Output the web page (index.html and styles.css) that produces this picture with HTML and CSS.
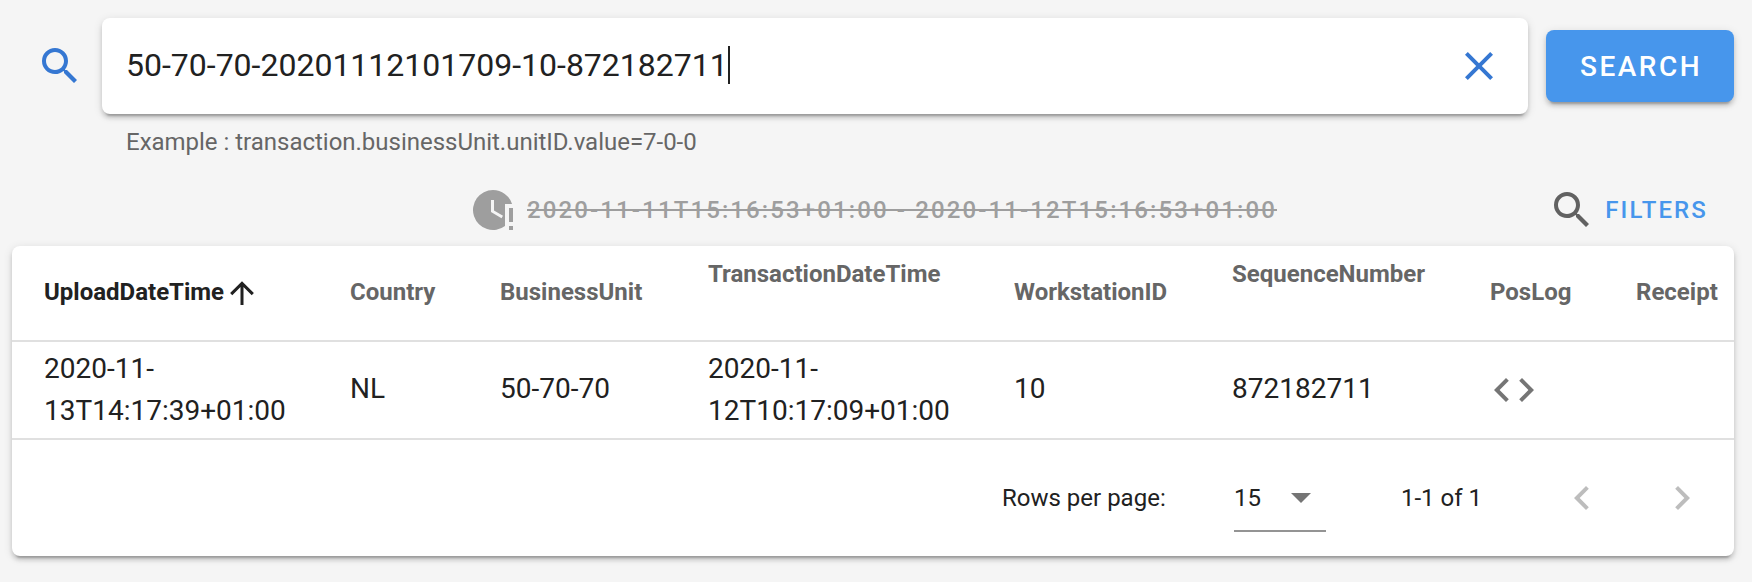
FILE: index.html
```html
<!DOCTYPE html>
<html lang="en">
<head>
<meta charset="utf-8">
<title>Transaction search</title>
<link rel="stylesheet" href="styles.css">
</head>
<body>
<main class="page">
  <form class="search">
    <svg class="icon search-icon" viewBox="0 0 24 24"><path d="M9.5,3A6.5,6.5 0 0,1 16,9.5C16,11.11 15.41,12.59 14.44,13.73L14.71,14H15.5L20.5,19L19,20.5L14,15.5V14.71L13.73,14.44C12.59,15.41 11.11,16 9.5,16A6.5,6.5 0 0,1 3,9.5A6.5,6.5 0 0,1 9.5,3M9.5,5C7,5 5,7 5,9.5C5,12 7,14 9.5,14C12,14 14,12 14,9.5C14,7 12,5 9.5,5Z"/></svg>
    <div class="field">
      <span class="field-value">50-70-70-20201112101709-10-872182711</span><span class="caret"></span>
      <svg class="icon clear-icon" viewBox="0 0 24 24"><path d="M19,6.41L17.59,5L12,10.59L6.41,5L5,6.41L10.59,12L5,17.59L6.41,19L12,13.41L17.59,19L19,17.59L13.41,12L19,6.41Z"/></svg>
    </div>
    <button class="search-button" type="button">SEARCH</button>
  </form>
  <div class="hint">Example : transaction.businessUnit.unitID.value=7-0-0</div>

  <div class="toolbar">
    <div class="range">
      <svg class="icon" viewBox="0 0 24 24"><path fill-rule="evenodd" d="M12,2A10,10 0 1,0 18,20V9H21.54A10,10 0 0,0 12,2M11,7H12.5V12.25L17,14.92L16.25,16.15L11,13V7M20,11H22V18H20V11M20,20H22V22H20V20Z"/></svg>
      <span class="range-text">2020-11-11T15:16:53+01:00 - 2020-11-12T15:16:53+01:00</span>
    </div>
    <div class="filters">
      <svg class="icon filters-icon" viewBox="0 0 24 24"><path d="M9.5,3A6.5,6.5 0 0,1 16,9.5C16,11.11 15.41,12.59 14.44,13.73L14.71,14H15.5L20.5,19L19,20.5L14,15.5V14.71L13.73,14.44C12.59,15.41 11.11,16 9.5,16A6.5,6.5 0 0,1 3,9.5A6.5,6.5 0 0,1 9.5,3M9.5,5C7,5 5,7 5,9.5C5,12 7,14 9.5,14C12,14 14,12 14,9.5C14,7 12,5 9.5,5Z"/></svg>
      <span class="filters-label">FILTERS</span>
    </div>
  </div>

  <section class="card">
    <div class="row head">
      <div class="cell sorted">UploadDateTime<svg class="sort-icon" viewBox="0 0 24 24"><path d="M13,20H11V8L5.5,13.5L4.08,12.08L12,4.16L19.92,12.08L18.5,13.5L13,8V20Z"/></svg></div>
      <div class="cell">Country</div>
      <div class="cell">BusinessUnit</div>
      <div class="cell raised">TransactionDateTime</div>
      <div class="cell">WorkstationID</div>
      <div class="cell raised">SequenceNumber</div>
      <div class="cell">PosLog</div>
      <div class="cell">Receipt</div>
    </div>
    <div class="row body">
      <div class="cell">2020-11-<br>13T14:17:39+01:00</div>
      <div class="cell single">NL</div>
      <div class="cell single">50-70-70</div>
      <div class="cell">2020-11-<br>12T10:17:09+01:00</div>
      <div class="cell single">10</div>
      <div class="cell single">872182711</div>
      <div class="cell"><svg class="icon code-icon" viewBox="0 0 24 24"><path d="M14.6,16.6L19.2,12L14.6,7.4L16,6L22,12L16,18L14.6,16.6M9.4,16.6L4.8,12L9.4,7.4L8,6L2,12L8,18L9.4,16.6Z"/></svg></div>
      <div class="cell"></div>
    </div>
    <div class="footer">
      <span class="footer-label">Rows per page:</span>
      <div class="select">
        <span class="select-value">15</span>
        <svg class="icon select-icon" viewBox="0 0 24 24"><path d="M7,10L12,15L17,10H7Z"/></svg>
      </div>
      <span class="footer-range">1-1 of 1</span>
      <svg class="icon page-icon" viewBox="0 0 24 24"><path d="M15.41,16.58L10.83,12L15.41,7.41L14,6L8,12L14,18L15.41,16.58Z"/></svg>
      <svg class="icon page-icon next" viewBox="0 0 24 24"><path d="M8.59,16.58L13.17,12L8.59,7.41L10,6L16,12L10,18L8.59,16.58Z"/></svg>
    </div>
  </section>
</main>
</body>
</html>
```
FILE: styles.css
```css
* { box-sizing: border-box; }

body {
  margin: 0;
  background: #f5f5f5;
  color: #212121;
  font-family: Roboto, "Liberation Sans", sans-serif;
}

.page {
  height: 582px;
  padding: 18px 18px 0 12px;
  overflow: hidden;
}

.icon {
  display: block;
  flex: none;
  width: 48px;
  height: 48px;
  fill: currentColor;
}

.search {
  display: flex;
  align-items: center;
  gap: 18px;
  padding-left: 24px;
}

.search-icon { color: #3577d2; }

.field {
  display: flex;
  flex: 1;
  align-items: center;
  height: 96px;
  padding: 0 25px 0 24px;
  border-radius: 8px;
  background: #fff;
  box-shadow: 0 6px 2px -4px rgba(0, 0, 0, .2), 0 4px 4px rgba(0, 0, 0, .14), 0 2px 10px rgba(0, 0, 0, .12);
  font-size: 32px;
  line-height: 40px;
}

.caret {
  width: 2px;
  height: 38px;
  margin-bottom: 2px;
  background: #212121;
}

.field-value { padding-bottom: 2px; }

.clear-icon {
  margin-left: auto;
  color: #3577d2;
}

.search-button {
  width: 188px;
  height: 72px;
  padding: 2px 0 0 2px;
  border: 0;
  border-radius: 8px;
  background: #4796ec;
  color: #fff;
  box-shadow: 0 6px 2px -4px rgba(0, 0, 0, .2), 0 4px 4px rgba(0, 0, 0, .14), 0 2px 10px rgba(0, 0, 0, .12);
  font: 500 28px/36px Roboto, sans-serif;
  letter-spacing: 2.5px;
}

.hint {
  padding: 16px 0 0 114px;
  color: #666;
  font-size: 24px;
  line-height: 24px;
  letter-spacing: -.015px;
}

.toolbar {
  display: flex;
  align-items: center;
  justify-content: space-between;
  height: 48px;
  margin: 32px 0 12px;
  padding: 0 26px 0 457px;
  font-size: 24px;
  font-weight: 500;
  letter-spacing: 2.12px;
}

.range {
  display: flex;
  align-items: center;
  gap: 10px;
  color: #9e9e9e;
}

.range-text { text-decoration: line-through; }

.filters {
  display: flex;
  align-items: center;
  gap: 9px;
  color: #4796ec;
}

.filters-icon { color: #616161; }

.card {
  height: 310px;
  border-radius: 8px;
  background: #fff;
  box-shadow: 0 6px 2px -4px rgba(0, 0, 0, .2), 0 4px 4px rgba(0, 0, 0, .14), 0 2px 10px rgba(0, 0, 0, .12);
}

.row {
  display: grid;
  grid-template-columns: 306px 150px 208px 306px 218px 258px 146px 130px;
  border-bottom: 2px solid #e0e0e0;
}

.cell {
  display: flex;
  align-items: center;
  padding-left: 32px;
}

.head {
  height: 96px;
  color: #666;
  font-size: 24px;
  font-weight: 700;
  line-height: 36px;
}

.head .cell { padding-bottom: 2px; }

.sorted { color: #212121; }

.head .raised { padding-bottom: 38px; }

.sort-icon {
  width: 36px;
  height: 36px;
  margin-top: 2px;
  fill: currentColor;
}

.body {
  height: 98px;
  font-size: 28px;
  line-height: 42px;
}

.single { padding-bottom: 2px; }

.code-icon { color: #757575; }

.footer {
  display: flex;
  align-items: center;
  height: 116px;
  padding-left: 990px;
  font-size: 24px;
  line-height: 36px;
}

.footer-label { width: 232px; }

.select {
  display: flex;
  align-items: center;
  justify-content: space-between;
  width: 92px;
  height: 68px;
  border-bottom: 2px solid #949494;
}

.select-value { padding-top: 2px; }

.select-icon {
  margin-right: 1px;
  color: #757575;
}

.footer-range {
  width: 157px;
  margin-left: 75px;
}

.next { margin-left: 52px; }

.page-icon { color: #bdbdbd; }
```
